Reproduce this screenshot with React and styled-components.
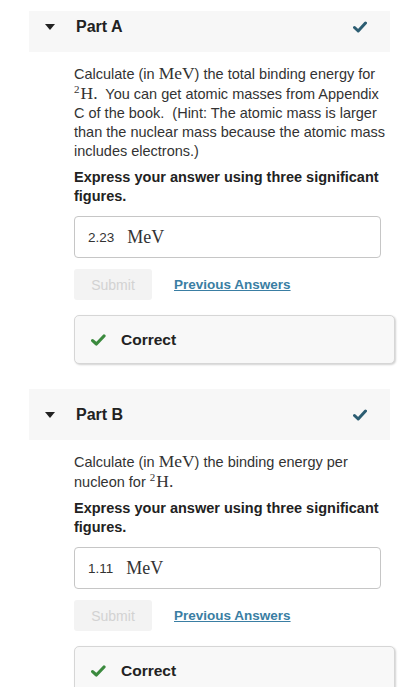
import React from "react";
import styled, { createGlobalStyle } from "styled-components";

const GlobalStyle = createGlobalStyle`
  body {
    margin: 0;
    background: #fff;
    font-family: "Liberation Sans", Arial, sans-serif;
    color: #333;
  }
`;

const MathText = styled.span`
  font-family: "Liberation Serif", "Times New Roman", serif;
  font-size: 17.5px;
  line-height: 1;

  sup {
    font-size: 11px;
    line-height: 1;
    vertical-align: 6px;
    margin-right: 1px;
  }
`;

const getParts = () => [
  {
    key: "a",
    label: "Part A",
    compact: true,
    question: (
      <>
        Calculate (in <MathText>MeV</MathText>) the total binding energy for{" "}
        <MathText>
          <sup>2</sup>H.
        </MathText>
        {"\u00a0 "}You can get atomic masses from Appendix C of the book.{" "}
        {"\u00a0"}(Hint: The atomic mass is larger than the nuclear mass
        because the atomic mass includes electrons.)
      </>
    ),
    answer: "2.23"
  },
  {
    key: "b",
    label: "Part B",
    question: (
      <>
        Calculate (in <MathText>MeV</MathText>) the binding energy per nucleon
        for{" "}
        <MathText>
          <sup>2</sup>H.
        </MathText>
      </>
    ),
    answer: "1.11"
  }
];

const HeaderCheck = () => (
  <svg width="14" height="12" viewBox="0 0 14 12">
    <path
      d="M1.5 6.5 L5.2 10 L12.5 2"
      fill="none"
      stroke="#2c5d72"
      strokeWidth="3"
      strokeLinecap="round"
      strokeLinejoin="round"
    />
  </svg>
);

const GreenCheck = () => (
  <svg width="15" height="12" viewBox="0 0 15 12">
    <path
      d="M1.6 6.6 L5.4 10 L13 2"
      fill="none"
      stroke="#3b8a3e"
      strokeWidth="3.2"
      strokeLinecap="round"
      strokeLinejoin="round"
    />
  </svg>
);

const App = () => {
  return (
    <>
      <GlobalStyle />
      <Page>
        {getParts().map(({ key, label, compact, question, answer }) => (
          <Section key={key}>
            <Header $compact={compact}>
              <Caret />
              <PartTitle>{label}</PartTitle>
              <HeaderCheck />
            </Header>
            <Body>
              <Question>{question}</Question>
              <Instruction>
                Express your answer using three significant figures.
              </Instruction>
              <AnswerBox>
                <AnswerValue>{answer}</AnswerValue>
                <Unit>MeV</Unit>
              </AnswerBox>
              <Actions>
                <SubmitButton disabled>Submit</SubmitButton>
                <PreviousLink href="#">Previous Answers</PreviousLink>
              </Actions>
              <Feedback>
                <GreenCheck />
                <FeedbackText>Correct</FeedbackText>
              </Feedback>
            </Body>
          </Section>
        ))}
      </Page>
    </>
  );
};

export default App;

const Page = styled.div`
  width: 417px;
  height: 687px;
  overflow: hidden;
  padding-top: 11px;
  box-sizing: border-box;
`;

const Section = styled.section`
  margin-left: 29px;
  margin-bottom: 25px;
`;

const Header = styled.div`
  width: 361px;
  height: ${props => (props.$compact ? "41px" : "51px")};
  box-sizing: border-box;
  padding: ${props => (props.$compact ? "0 23px 10px 16px" : "0 23px 0 16px")};
  background: #f7f7f7;
  display: flex;
  align-items: center;
`;

const Caret = styled.span`
  width: 0;
  height: 0;
  border-left: 5.5px solid transparent;
  border-right: 5.5px solid transparent;
  border-top: 6px solid #222;
  margin-right: 21px;
`;

const PartTitle = styled.h2`
  flex: 1;
  margin: 0;
  font-size: 16px;
  font-weight: 700;
  color: #222;
`;

const Body = styled.div`
  padding: 13px 0 0 45px;
`;

const Question = styled.p`
  width: 312px;
  margin: 0;
  font-size: 14.5px;
  line-height: 19px;
  color: #333;
`;

const Instruction = styled.p`
  width: 312px;
  margin: 7px 0 0;
  font-size: 14.5px;
  line-height: 19px;
  font-weight: 700;
  color: #222;
`;

const AnswerBox = styled.div`
  width: 307px;
  height: 42px;
  box-sizing: border-box;
  margin-top: 10px;
  padding-left: 13px;
  border: 1px solid #c6c6c6;
  border-radius: 4px;
  display: flex;
  align-items: center;
  gap: 13px;
`;

const AnswerValue = styled.span`
  font-size: 13.5px;
  color: #333;
`;

const Unit = styled.span`
  font-family: "Liberation Serif", "Times New Roman", serif;
  font-size: 18px;
  color: #333;
`;

const Actions = styled.div`
  margin-top: 11px;
  display: flex;
  align-items: center;
  gap: 22px;
`;

const SubmitButton = styled.button`
  width: 78px;
  height: 31px;
  border: none;
  border-radius: 3px;
  background: #f3f3f3;
  color: #d2d2d2;
  font-family: "Liberation Sans", Arial, sans-serif;
  font-size: 14px;
  padding: 0;
`;

const PreviousLink = styled.a`
  font-size: 13.5px;
  font-weight: 700;
  color: #3a7ea3;
  text-decoration: underline;
`;

const Feedback = styled.div`
  width: 321px;
  height: 49px;
  box-sizing: border-box;
  margin-top: 15px;
  padding-left: 16px;
  background: #f8f8f8;
  border: 1px solid #d6d6d6;
  border-radius: 5px;
  box-shadow: 1px 1px 2px rgba(0, 0, 0, 0.18);
  display: flex;
  align-items: center;
  gap: 15px;
`;

const FeedbackText = styled.span`
  font-size: 15.5px;
  font-weight: 700;
  color: #222;
`;
